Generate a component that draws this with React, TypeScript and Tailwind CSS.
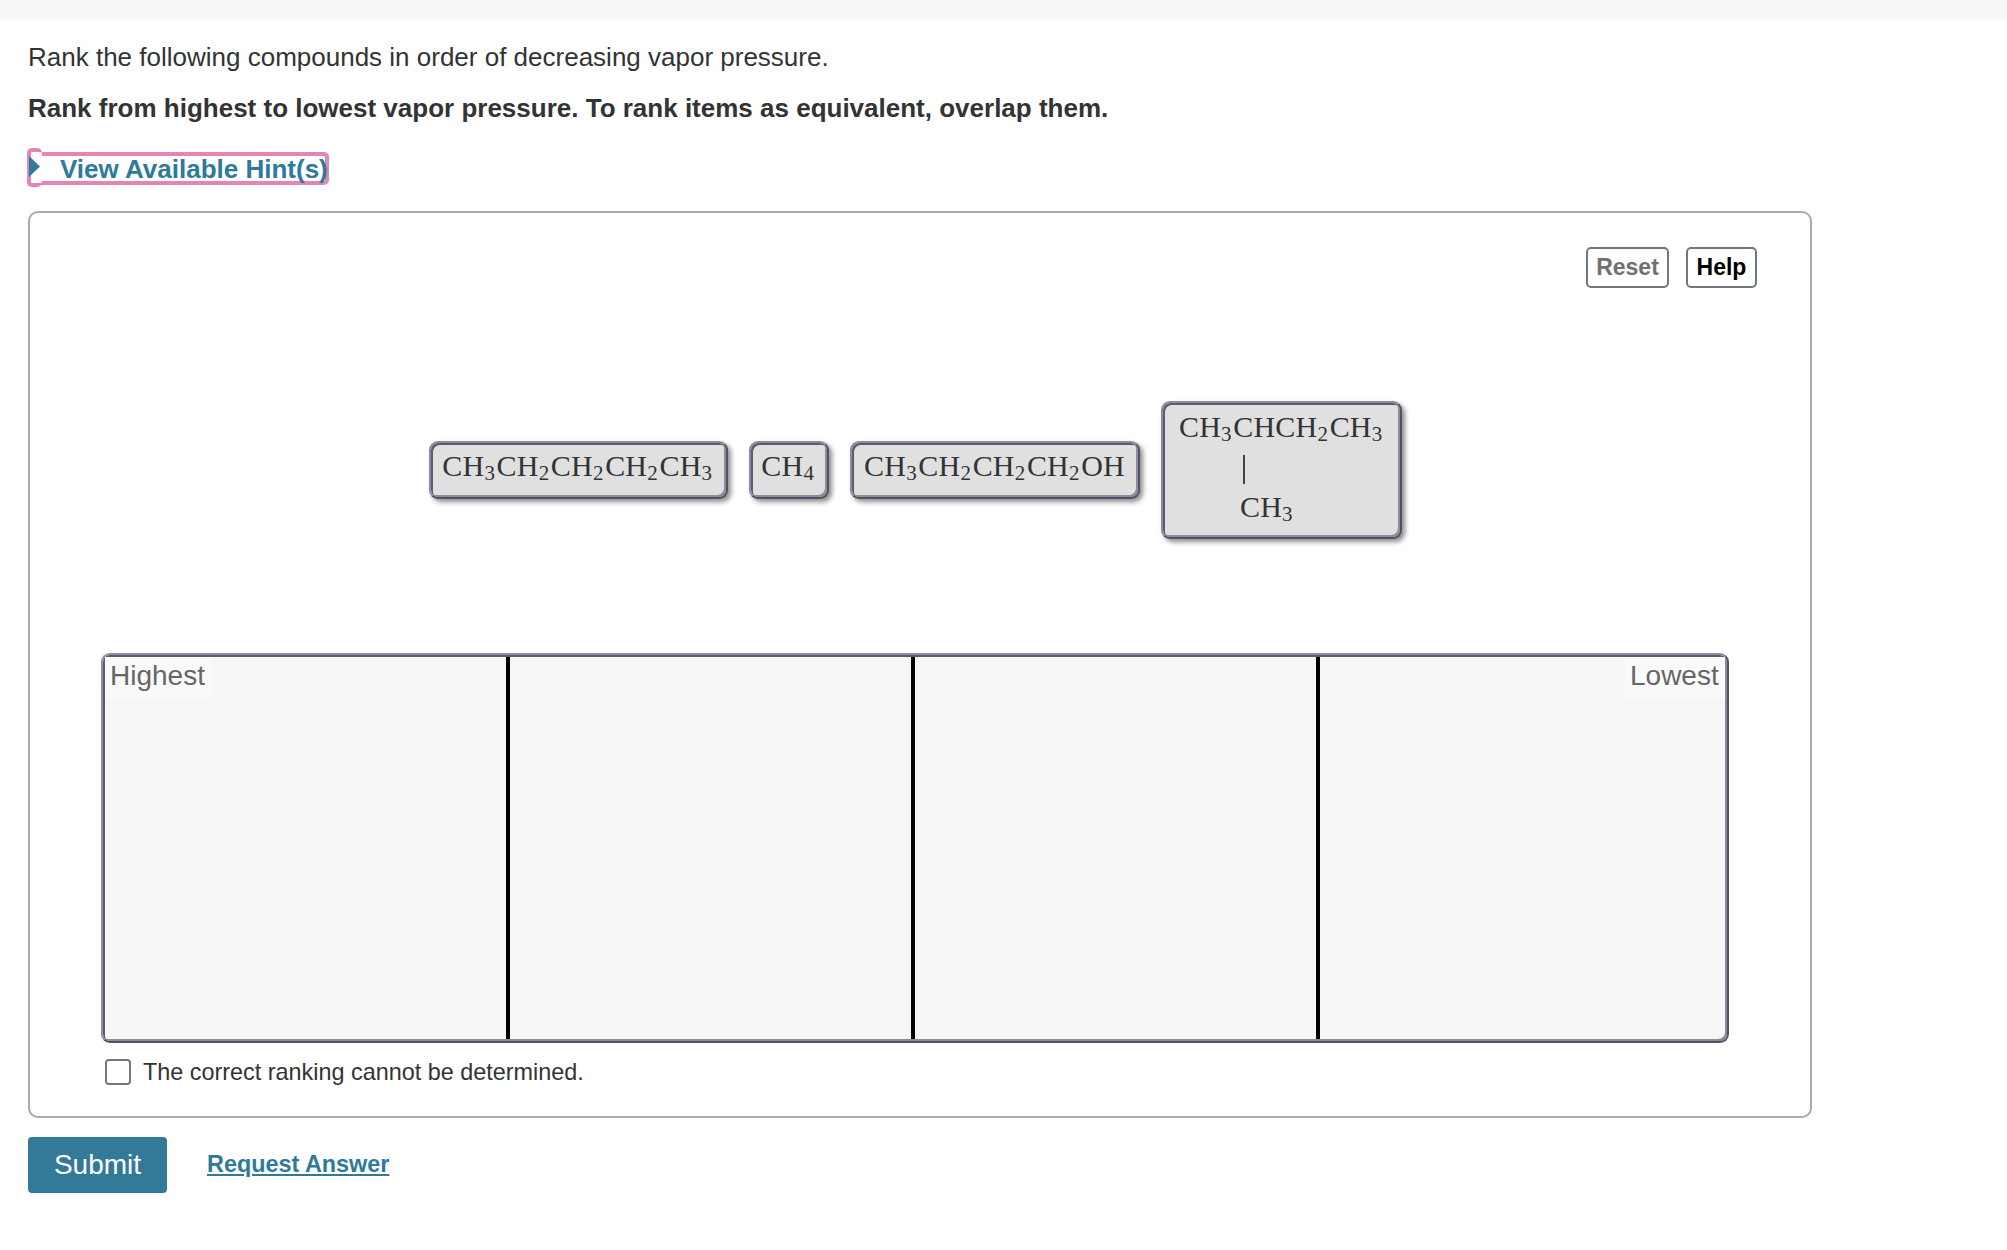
const bevel =
  "rounded-[9px] border-2 border-t-[#8d8ba0] border-l-[#8d8ba0] border-r-[#54525f] border-b-[#54525f] shadow-[inset_2px_2px_0_#5e5c6b,inset_-2px_-2px_0_#8d8ba0]";
const tileBase =
  "rounded-[9px] border-2 border-t-[#8d8ba0] border-l-[#8d8ba0] border-r-[#54525f] border-b-[#54525f] bg-[#e0e0e0] shadow-[inset_2px_2px_0_#5e5c6b,inset_-2px_-2px_0_#8d8ba0,3px_3px_5px_rgba(0,0,0,0.45)]";

function Sub({ n }: { n: number }) {
  return <span className="text-[21px] align-[-4px] leading-none mr-[1.5px]">{n}</span>;
}

function Formula({ parts }: { parts: (string | number)[] }) {
  return (
    <div className="font-['Liberation_Serif',serif] text-[30px] leading-[30px] tracking-[0.2px] text-[#333] whitespace-nowrap">
      {parts.map((p, i) => (typeof p === "number" ? <Sub key={i} n={p} /> : <span key={i}>{p}</span>))}
    </div>
  );
}

function Tile({ width, parts }: { width: string; parts: (string | number)[] }) {
  return (
    <div className={`${width} h-[58px] pb-[5px] pr-[1px] flex items-center justify-center ${tileBase}`}>
      <Formula parts={parts} />
    </div>
  );
}

export default function App() {
  return (
    <div className="w-[2007px] h-[1250px] bg-white font-['Liberation_Sans',Arial,sans-serif] text-[#333] overflow-hidden">
      <div className="h-5 bg-[#f8f8f8]" />

      <div className="pl-7 pt-[22px] text-[26px] leading-[30px]">Rank the following compounds in order of decreasing vapor pressure.</div>
      <div className="pl-7 pt-[21px] text-[26px] leading-[30px] font-bold">Rank from highest to lowest vapor pressure. To rank items as equivalent, overlap them.</div>

      <div className="ml-[27px] mt-[29px] relative w-[302px] h-[33px] rounded-[5px] border-4 border-[#e685b5] flex items-center">
        <div className="absolute -left-[4px] -top-[8px] w-[15px] h-[39px] rounded-[5px] border-4 border-r-0 border-[#e685b5] bg-white flex items-center overflow-visible">
          <svg width="11" height="21" viewBox="0 0 11 21" className="-ml-[2px] -mt-[3px] shrink-0">
            <path d="M0 0 L11 10.5 L0 21 Z" fill="#2f7a9c" />
          </svg>
        </div>
        <span className="ml-[29px] text-[26px] leading-[30px] font-bold text-[#2e7a9b] whitespace-nowrap">View Available Hint(s)</span>
      </div>

      <div className="ml-7 mt-[26px] w-[1784px] h-[907px] rounded-[10px] border-2 border-[#aaaaaa] bg-white">
        <div className="flex justify-end gap-[17px] pr-[53px] pt-[34px]">
          <button className="w-[83px] h-[41px] rounded-[5px] border-2 border-[#6e7880] bg-white text-[23px] font-bold text-[#707070]">Reset</button>
          <button className="w-[71px] h-[41px] rounded-[5px] border-2 border-[#6e7880] bg-white text-[23px] font-bold text-black">Help</button>
        </div>

        <div className="mt-[113px] ml-[399px] h-[138px] flex items-center gap-[21px]">
          <Tile width="w-[299px]" parts={["CH", 3, "CH", 2, "CH", 2, "CH", 2, "CH", 3]} />
          <Tile width="w-[80px]" parts={["CH", 4]} />
          <Tile width="w-[290px]" parts={["CH", 3, "CH", 2, "CH", 2, "CH", 2, "OH"]} />
          <div className={`w-[241px] h-[138px] pl-[16px] pt-[9px] ${tileBase}`}>
            <Formula parts={["CH", 3, "CHCH", 2, "CH", 3]} />
            <div className="mt-[10px] ml-[64px] w-[1.5px] h-[29px] bg-[#444]" />
            <div className="mt-[8px] ml-[61px]">
              <Formula parts={["CH", 3]} />
            </div>
          </div>
        </div>

        <div className={`mt-[114px] ml-[71px] w-[1628px] h-[390px] p-[2px] bg-[#f7f7f7] relative ${bevel}`}>
          <div className="grid grid-cols-4 h-full">
            <div className="border-r-4 border-black" />
            <div className="border-r-4 border-black" />
            <div className="border-r-4 border-black" />
            <div />
          </div>
          <div className="absolute left-[2px] top-[2px] w-[106px] h-[42px] bg-[#fafafa] pl-[5px] text-[28px] leading-[38px] text-[#666]">Highest</div>
          <div className="absolute right-[2px] top-[2px] w-[101px] h-[42px] bg-[#fafafa] pl-[6px] text-[28px] leading-[38px] text-[#666]">Lowest</div>
        </div>

        <label className="mt-4 ml-[75px] flex items-center gap-3 text-[23.4px] leading-[26px] text-[#333]">
          <span className="w-[26px] h-[26px] rounded-[4px] border-2 border-[#777] bg-white" />
          The correct ranking cannot be determined.
        </label>
      </div>

      <div className="ml-7 mt-[19px] flex items-center gap-10">
        <button className="w-[139px] h-[56px] rounded-[4px] bg-[#337a99] text-[28px] text-white">Submit</button>
        <a className="text-[23.4px] font-bold underline text-[#2e7a9b]">Request Answer</a>
      </div>
    </div>
  );
}
